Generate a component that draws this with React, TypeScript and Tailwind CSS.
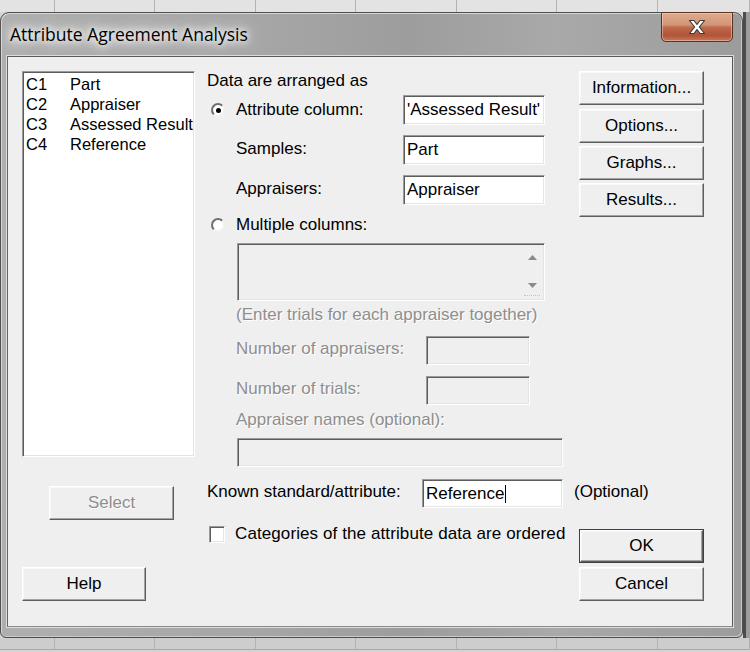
import React from "react";

const sunken =
  "border border-t-[#9a9a9a] border-l-[#9a9a9a] border-r-white border-b-white shadow-[inset_1px_1px_0_#5c5c5c,inset_-1px_-1px_0_#e4e4e4]";
const raised =
  "border border-t-white border-l-white border-r-[#5e5e5e] border-b-[#5e5e5e] shadow-[inset_-1px_-1px_0_#a3a3a3,inset_1px_1px_0_#f8f8f8]";
const dim = "text-[#8e8e8e] [text-shadow:1px_1px_0_#ffffff]";

function Button({
  label,
  className = "",
  disabled = false,
}: {
  label: string;
  className?: string;
  disabled?: boolean;
}) {
  return (
    <div
      className={`flex items-center justify-center bg-[#efefef] ${raised} ${className} ${disabled ? dim : ""}`}
    >
      {label}
    </div>
  );
}

function Radio({ checked = false }: { checked?: boolean }) {
  return (
    <div className="w-[14px] h-[14px] rounded-full bg-white border-2 border-t-[#6e6e6e] border-l-[#6e6e6e] border-r-[#f2f2f2] border-b-[#f2f2f2] flex items-center justify-center">
      {checked && <div className="w-[5px] h-[5px] rounded-full bg-black" />}
    </div>
  );
}

function SheetRow({ className, line }: { className: string; line?: boolean }) {
  const widths = ["w-[55px]", "w-[100px]", "w-[101px]", "w-[100px]", "w-[101px]", "w-[100px]", "w-[101px]", "flex-1"];
  return (
    <div className={`flex ${className}`}>
      {widths.map((w, i) => (
        <div
          key={i}
          className={`${w} h-full border-r border-[#b3b3b3] ${line ? "border-b border-b-[#a9a9a9]" : ""}`}
        />
      ))}
    </div>
  );
}

const columns = [
  ["C1", "Part"],
  ["C2", "Appraiser"],
  ["C3", "Assessed Result"],
  ["C4", "Reference"],
];

function Client() {
  return (
    <div className="ml-[6px] w-[726px] h-[571px] bg-[#efefef] border border-t-[#5a5a5a] border-l-[#666666] border-r-[#5a5a5a] border-b-[#8a8a8a] shadow-[0_0_0_1px_#dcdcdc] pl-[14px] pt-[14px] flex flex-col">
      {/* top block */}
      <div className="flex items-start">
        <div className={`w-[173px] h-[386px] bg-white ${sunken} pl-[3px] pt-[2px] text-[16.5px]`}>
          {columns.map(([c, n]) => (
            <div key={c} className="flex h-[20px] items-center">
              <span className="w-[44px]">{c}</span>
              <span>{n}</span>
            </div>
          ))}
        </div>

        <div className="ml-[12px] w-[372px] flex flex-col">
          <div className="h-[20px] flex items-center">Data are arranged as</div>

          <div className="mt-[4px] h-[30px] flex items-center">
            <div className="w-[29px] pl-[4px]">
              <Radio checked />
            </div>
            <div className="w-[167px]">Attribute column:</div>
            <div className={`w-[142px] h-[30px] bg-white ${sunken} pl-[3px] flex items-center whitespace-nowrap overflow-hidden`}>
              'Assessed Result'
            </div>
          </div>

          <div className="mt-[10px] h-[30px] flex items-center">
            <div className="w-[29px]" />
            <div className="w-[167px] -mt-[3px]">Samples:</div>
            <div className={`w-[142px] h-[30px] bg-white ${sunken} pl-[3px] flex items-center`}>Part</div>
          </div>

          <div className="mt-[10px] h-[30px] flex items-center">
            <div className="w-[29px]" />
            <div className="w-[167px] -mt-[3px]">Appraisers:</div>
            <div className={`w-[142px] h-[30px] bg-white ${sunken} pl-[3px] flex items-center`}>Appraiser</div>
          </div>

          <div className="mt-[10px] h-[20px] flex items-center">
            <div className="w-[29px] pl-[4px]">
              <Radio />
            </div>
            <div>Multiple columns:</div>
          </div>

          <div className={`mt-[8px] ml-[30px] w-[308px] h-[58px] bg-[#efefef] ${sunken} flex justify-end`}>
            <div className="w-[24px] h-full flex flex-col items-center justify-between pt-[11px] pb-[3px]">
              <svg width="9" height="5" viewBox="0 0 9 5">
                <path d="M0 5 4.5 0 9 5z" fill="#8a8a8a" />
              </svg>
              <div className="flex flex-col items-center gap-[7px]">
                <svg width="9" height="5" viewBox="0 0 9 5">
                  <path d="M0 0h9L4.5 5z" fill="#8a8a8a" />
                </svg>
                <div className="w-[16px] h-[2px] border-t border-dotted border-[#c4c4c4]" />
              </div>
            </div>
          </div>

          <div className={`mt-[4px] ml-[29px] h-[20px] flex items-center whitespace-nowrap ${dim}`}>
            (Enter trials for each appraiser together)
          </div>

          <div className="mt-[11px] h-[29px] flex items-center">
            <div className={`ml-[29px] w-[190px] -mt-[3px] ${dim}`}>Number of appraisers:</div>
            <div className={`w-[104px] h-[29px] bg-[#efefef] ${sunken}`} />
          </div>

          <div className="mt-[11px] h-[29px] flex items-center">
            <div className={`ml-[29px] w-[190px] -mt-[3px] ${dim}`}>Number of trials:</div>
            <div className={`w-[104px] h-[29px] bg-[#efefef] ${sunken}`} />
          </div>

          <div className={`mt-[5px] ml-[29px] h-[20px] flex items-center ${dim}`}>Appraiser names (optional):</div>

          <div className={`mt-[8px] ml-[30px] w-[326px] h-[29px] bg-[#efefef] ${sunken}`} />
        </div>

        <div className="w-[125px] flex flex-col">
          <Button label="Information..." className="h-[34px]" />
          <Button label="Options..." className="h-[34px] mt-[4px]" />
          <Button label="Graphs..." className="h-[34px] mt-[3px]" />
          <Button label="Results..." className="h-[34px] mt-[3px]" />
        </div>
      </div>

      {/* known standard row */}
      <div className="mt-[12px] flex items-start">
        <Button label="Select" disabled className="ml-[27px] mt-[7px] w-[125px] h-[34px]" />
        <div className="ml-[33px] w-[215px] h-[29px] flex items-center -mt-[2px]">Known standard/attribute:</div>
        <div className={`w-[141px] h-[29px] bg-white ${sunken} pl-[3px] flex items-center`}>
          Reference
          <span className="ml-px w-px h-[18px] bg-black" />
        </div>
        <div className="ml-[11px] h-[29px] flex items-center -mt-[2px]">(Optional)</div>
      </div>

      {/* ordered checkbox + OK */}
      <div className="flex items-start">
        <div className="ml-[187px] mt-[4px] w-[370px] flex items-center">
          <div className={`w-[16px] h-[17px] bg-white ${sunken}`} />
          <div className="ml-[10px] whitespace-nowrap tracking-[0.1px]">Categories of the attribute data are ordered</div>
        </div>
        <div className="mt-[9px] w-[125px] h-[34px] border border-[#404040] flex">
          <Button label="OK" className="flex-1" />
        </div>
      </div>

      {/* help + cancel */}
      <div className="mt-[4px] flex items-start">
        <Button label="Help" className="w-[124px] h-[34px]" />
        <Button label="Cancel" className="ml-[433px] w-[125px] h-[34px]" />
      </div>
    </div>
  );
}

function Window() {
  return (
    <div className="w-[743px] h-[626px] flex flex-col rounded-t-[9px] rounded-b-[6px] border border-[#4f4f4f] bg-[linear-gradient(90deg,#afafaf_0%,#a6a6a6_35%,#9d9d9d_55%,#a9a9a9_75%,#9c9c9c_100%)] shadow-[inset_1px_1px_0_#d6d6d6,inset_-1px_-1px_0_#c9c9c9]">
      <div className="h-[43px] flex items-start justify-between">
        <div className="pl-[9px] pt-[9px] h-[24px] leading-[24px] text-[17.5px] font-['Open_Sans',sans-serif] text-black [text-shadow:0_0_6px_#ffffff,0_0_10px_#ffffff,0_0_16px_#f4f4f4,0_0_22px_#eeeeee]">
          Attribute Agreement Analysis
        </div>
        <div className="-mt-px mr-[9px] w-[72px] h-[30px] rounded-b-[5px] border border-[#5a3324] bg-[linear-gradient(180deg,#deaa8c_0%,#d29677_42%,#c0694a_52%,#b1533a_80%,#c47a5c_100%)] shadow-[inset_0_0_0_1px_rgba(255,235,220,0.4)] flex items-center justify-center">
          <svg width="20" height="16" viewBox="0 0 20 16">
            <path
              d="M2.5 1.5h4.5l3 4 3-4h4.5l-5.2 6.5 5.2 6.5H13l-3-4-3 4H2.5l5.2-6.5z"
              fill="#ffffff"
              stroke="#3a3a3a"
              strokeWidth="1.1"
              strokeLinejoin="round"
            />
          </svg>
        </div>
      </div>
      <Client />
    </div>
  );
}

export default function App() {
  return (
    <div className="w-[750px] h-[652px] overflow-hidden bg-[#d4d4d4] flex flex-col font-['Liberation_Sans',Arial,sans-serif] text-[17px] leading-[20px] text-black">
      <SheetRow className="h-[12px] bg-[#e3e3e3]" />
      <div className="flex h-[626px]">
        <Window />
        <div className="flex-1 border-l-[3px] border-[#4c4c4c] bg-[#9d9d9d]" />
      </div>
      <SheetRow className="h-[12px] bg-[#cdcdcd]" line />
    </div>
  );
}
